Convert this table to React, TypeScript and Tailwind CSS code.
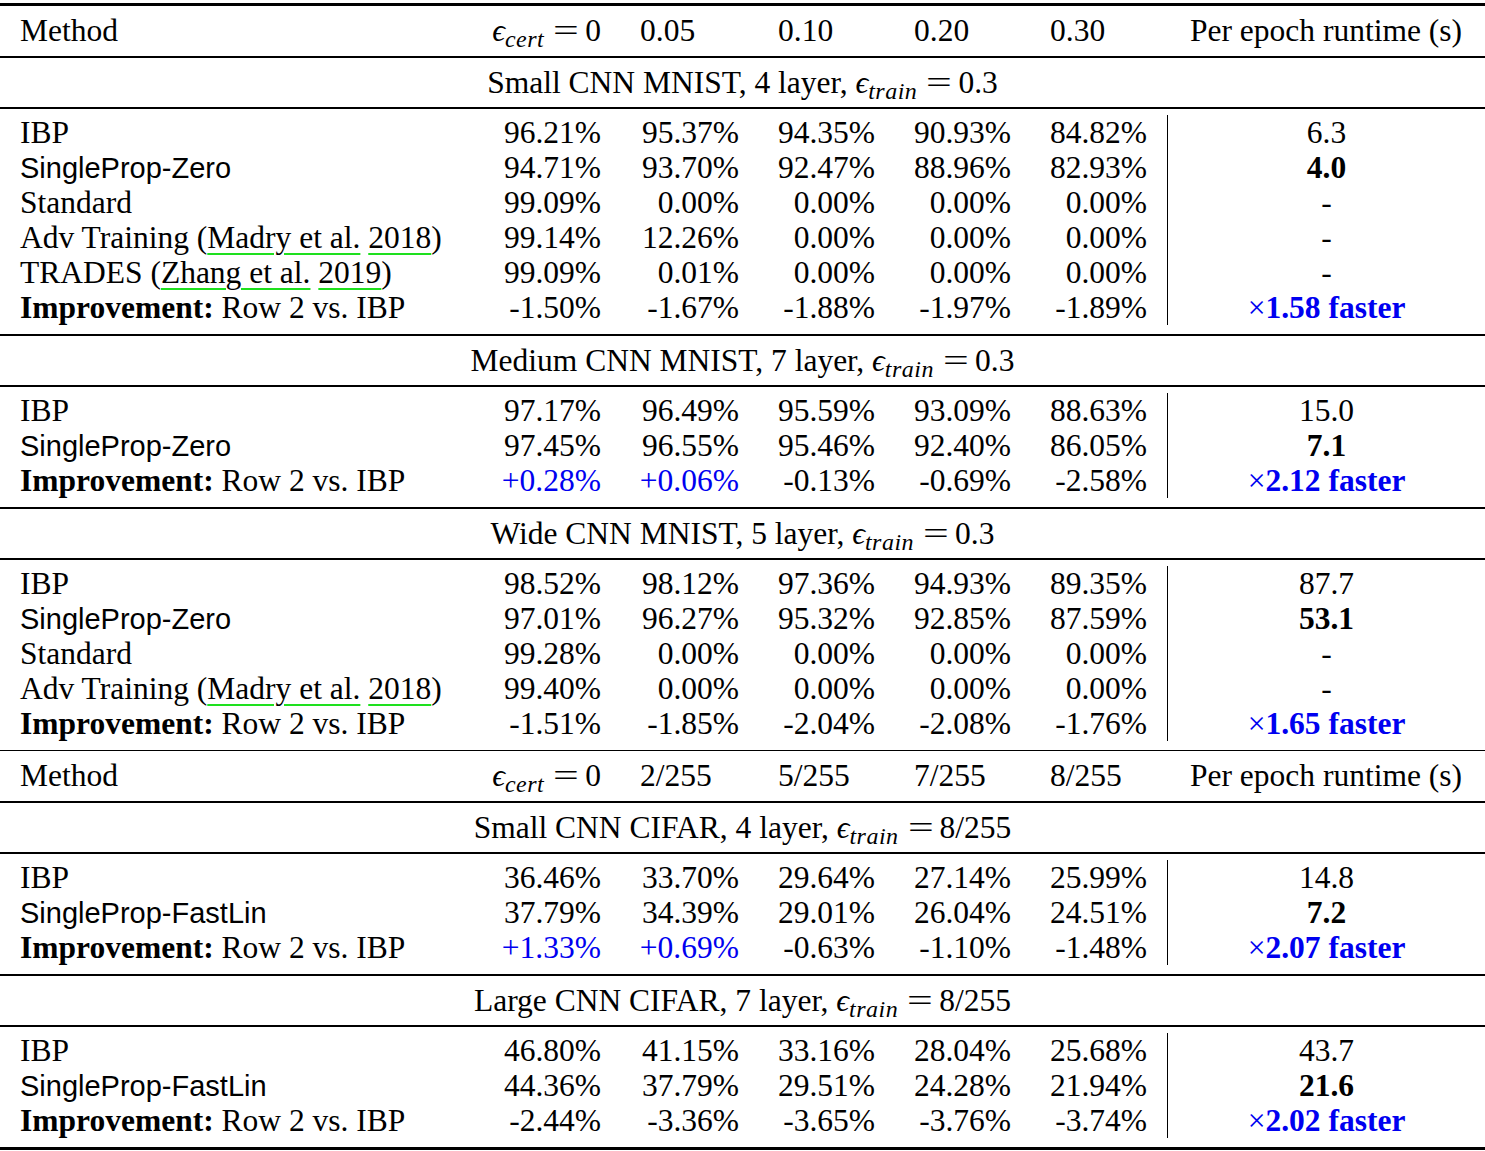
import React from "react";

const BLUE = "text-[#0000f0]";

type Val = string | { t: string; blue: true };

type Row = {
  method: React.ReactNode;
  vals: Val[];
  rt: React.ReactNode;
};

const Cite = ({ a, y }: { a: string; y: string }) => (
  <>
    (
    <span className="underline decoration-[#1ee01e] decoration-2 underline-offset-[5px]">{a}</span>{" "}
    <span className="underline decoration-[#1ee01e] decoration-2 underline-offset-[5px]">{y}</span>)
  </>
);

const Sans = ({ children }: { children: React.ReactNode }) => (
  <span className="font-['Liberation_Sans',Arial,sans-serif] text-[29px]">{children}</span>
);

const Imp = () => (
  <>
    <span className="font-bold">Improvement:</span> Row 2 vs. IBP
  </>
);

const Faster = ({ n }: { n: string }) => (
  <span className={BLUE}>
    ×<span className="font-bold">{n} faster</span>
  </span>
);

const Eq = ({ sub, val }: { sub: string; val: string }) => (
  <span className="whitespace-nowrap">
    <span className="italic">ϵ</span>
    <span className="italic text-[24px] tracking-[0.5px] leading-none align-[-6px]">{sub}</span>
    <span className="inline-block w-[26px] text-center ml-[9px] mr-[6px] scale-x-[1.45]">=</span>
    {val}
  </span>
);

const GRID = "grid grid-cols-[470px_131px_138px_136px_136px_156px_318px]";

function Header({ cols }: { cols: string[] }) {
  return (
    <div className={`${GRID} h-[50px] items-center`}>
      <div className="pl-[20px]">Method</div>
      <div className="text-right whitespace-nowrap">
        <Eq sub="cert" val="0" />
      </div>
      {cols.map((c, i) => (
        <div key={i} className="pl-[39px]">
          {c}
        </div>
      ))}
      <div className="text-center whitespace-nowrap">Per epoch runtime (s)</div>
    </div>
  );
}

function Section({ children }: { children: React.ReactNode }) {
  return <div className="h-[49px] flex items-center justify-center whitespace-nowrap">{children}</div>;
}

function Block({ rows }: { rows: Row[] }) {
  return (
    <div className="pt-[6px] pb-[9px]">
      {rows.map((r, i) => (
        <div key={i} className={`${GRID} h-[35px] leading-[35px]`}>
          <div className="pl-[20px] whitespace-nowrap">{r.method}</div>
          {r.vals.map((v, j) => (
            <div key={j} className={`text-right whitespace-nowrap ${j === 4 ? "pr-[20px]" : ""}`}>
              {typeof v === "string" ? v : <span className={BLUE}>{v.t}</span>}
            </div>
          ))}
          <div className="border-l border-black text-center whitespace-nowrap">{r.rt}</div>
        </div>
      ))}
    </div>
  );
}

const Rule = () => <div className="h-[2px] bg-black" />;

const b = (t: string): Val => ({ t, blue: true });

export default function App() {
  return (
    <div className="w-[1485px] h-[1151px] bg-white text-black font-['Liberation_Serif','Times_New_Roman',serif] text-[31.5px] pt-[3px]">
      <div className="h-[3px] bg-black" />
      <Header cols={["0.05", "0.10", "0.20", "0.30"]} />
      <Rule />
      <Section>
        Small CNN MNIST, 4 layer,&nbsp;<Eq sub="train" val="0.3" />
      </Section>
      <Rule />
      <Block
        rows={[
          { method: "IBP", vals: ["96.21%", "95.37%", "94.35%", "90.93%", "84.82%"], rt: "6.3" },
          { method: <Sans>SingleProp-Zero</Sans>, vals: ["94.71%", "93.70%", "92.47%", "88.96%", "82.93%"], rt: <b>4.0</b> },
          { method: "Standard", vals: ["99.09%", "0.00%", "0.00%", "0.00%", "0.00%"], rt: "-" },
          {
            method: (
              <>
                Adv Training <Cite a="Madry et al." y="2018" />
              </>
            ),
            vals: ["99.14%", "12.26%", "0.00%", "0.00%", "0.00%"],
            rt: "-",
          },
          {
            method: (
              <>
                TRADES <Cite a="Zhang et al." y="2019" />
              </>
            ),
            vals: ["99.09%", "0.01%", "0.00%", "0.00%", "0.00%"],
            rt: "-",
          },
          { method: <Imp />, vals: ["-1.50%", "-1.67%", "-1.88%", "-1.97%", "-1.89%"], rt: <Faster n="1.58" /> },
        ]}
      />
      <Rule />
      <Section>
        Medium CNN MNIST, 7 layer,&nbsp;<Eq sub="train" val="0.3" />
      </Section>
      <Rule />
      <Block
        rows={[
          { method: "IBP", vals: ["97.17%", "96.49%", "95.59%", "93.09%", "88.63%"], rt: "15.0" },
          { method: <Sans>SingleProp-Zero</Sans>, vals: ["97.45%", "96.55%", "95.46%", "92.40%", "86.05%"], rt: <b>7.1</b> },
          { method: <Imp />, vals: [b("+0.28%"), b("+0.06%"), "-0.13%", "-0.69%", "-2.58%"], rt: <Faster n="2.12" /> },
        ]}
      />
      <Rule />
      <Section>
        Wide CNN MNIST, 5 layer,&nbsp;<Eq sub="train" val="0.3" />
      </Section>
      <Rule />
      <Block
        rows={[
          { method: "IBP", vals: ["98.52%", "98.12%", "97.36%", "94.93%", "89.35%"], rt: "87.7" },
          { method: <Sans>SingleProp-Zero</Sans>, vals: ["97.01%", "96.27%", "95.32%", "92.85%", "87.59%"], rt: <b>53.1</b> },
          { method: "Standard", vals: ["99.28%", "0.00%", "0.00%", "0.00%", "0.00%"], rt: "-" },
          {
            method: (
              <>
                Adv Training <Cite a="Madry et al." y="2018" />
              </>
            ),
            vals: ["99.40%", "0.00%", "0.00%", "0.00%", "0.00%"],
            rt: "-",
          },
          { method: <Imp />, vals: ["-1.51%", "-1.85%", "-2.04%", "-2.08%", "-1.76%"], rt: <Faster n="1.65" /> },
        ]}
      />
      <div className="h-[1px] bg-black" />
      <Header cols={["2/255", "5/255", "7/255", "8/255"]} />
      <Rule />
      <Section>
        Small CNN CIFAR, 4 layer,&nbsp;<Eq sub="train" val="8/255" />
      </Section>
      <Rule />
      <Block
        rows={[
          { method: "IBP", vals: ["36.46%", "33.70%", "29.64%", "27.14%", "25.99%"], rt: "14.8" },
          { method: <Sans>SingleProp-FastLin</Sans>, vals: ["37.79%", "34.39%", "29.01%", "26.04%", "24.51%"], rt: <b>7.2</b> },
          { method: <Imp />, vals: [b("+1.33%"), b("+0.69%"), "-0.63%", "-1.10%", "-1.48%"], rt: <Faster n="2.07" /> },
        ]}
      />
      <Rule />
      <Section>
        Large CNN CIFAR, 7 layer,&nbsp;<Eq sub="train" val="8/255" />
      </Section>
      <Rule />
      <Block
        rows={[
          { method: "IBP", vals: ["46.80%", "41.15%", "33.16%", "28.04%", "25.68%"], rt: "43.7" },
          { method: <Sans>SingleProp-FastLin</Sans>, vals: ["44.36%", "37.79%", "29.51%", "24.28%", "21.94%"], rt: <b>21.6</b> },
          { method: <Imp />, vals: ["-2.44%", "-3.36%", "-3.65%", "-3.76%", "-3.74%"], rt: <Faster n="2.02" /> },
        ]}
      />
      <div className="h-[3px] bg-black" />
    </div>
  );
}
